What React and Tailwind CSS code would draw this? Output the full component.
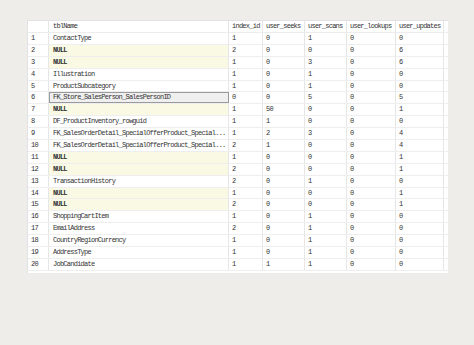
import React from "react";

const rows = [
  ["ContactType", 1, 0, 1, 0, 0],
  ["NULL", 2, 0, 0, 0, 6],
  ["NULL", 1, 0, 3, 0, 6],
  ["Illustration", 1, 0, 1, 0, 0],
  ["ProductSubcategory", 1, 0, 1, 0, 0],
  ["FK_Store_SalesPerson_SalesPersonID", 0, 0, 5, 0, 5],
  ["NULL", 1, 50, 0, 0, 1],
  ["DF_ProductInventory_rowguid", 1, 1, 0, 0, 0],
  ["FK_SalesOrderDetail_SpecialOfferProduct_Special...", 1, 2, 3, 0, 4],
  ["FK_SalesOrderDetail_SpecialOfferProduct_Special...", 2, 1, 0, 0, 4],
  ["NULL", 1, 0, 0, 0, 1],
  ["NULL", 2, 0, 0, 0, 1],
  ["TransactionHistory", 2, 0, 1, 0, 0],
  ["NULL", 1, 0, 0, 0, 1],
  ["NULL", 2, 0, 0, 0, 1],
  ["ShoppingCartItem", 1, 0, 1, 0, 0],
  ["EmailAddress", 2, 0, 1, 0, 0],
  ["CountryRegionCurrency", 1, 0, 1, 0, 0],
  ["AddressType", 1, 0, 1, 0, 0],
  ["JobCandidate", 1, 1, 1, 0, 0],
];

const numCols = [
  { w: "w-[34px]" },
  { w: "w-[42px]" },
  { w: "w-[42px]" },
  { w: "w-[49px]" },
  { w: "w-[48px]" },
];

export default function App() {
  return (
    <div
      className="w-[474px] h-[345px] bg-[#eeede9] pt-[20px] pl-[27px] text-[#333333]"
      style={{ fontFamily: '"Liberation Mono", "DejaVu Sans Mono", monospace' }}
    >
      <div className="w-[421px] h-[253px] bg-white border-t border-l border-[#e2e2e2] text-[7px] tracking-[-0.75px] leading-none">
        {/* header */}
        <div className="flex h-[12px] border-b border-[#ececec]">
          <div className="w-[21px] border-r border-[#e6e6e6]" />
          <div className="w-[180px] border-r border-[#e6e6e6] flex items-center pl-[4px]">tblName</div>
          <div className="w-[34px] border-r border-[#e6e6e6] flex items-center pl-[3px]">index_id</div>
          <div className="w-[42px] border-r border-[#e6e6e6] flex items-center pl-[3px]">user_seeks</div>
          <div className="w-[42px] border-r border-[#e6e6e6] flex items-center pl-[3px]">user_scans</div>
          <div className="w-[49px] border-r border-[#e6e6e6] flex items-center pl-[3px]">user_lookups</div>
          <div className="w-[48px] border-r border-[#e6e6e6] flex items-center pl-[3px]">user_updates</div>
        </div>
        {rows.map((r, i) => {
          const isNull = r[0] === "NULL";
          const selected = i === 5;
          return (
            <div key={i} className="flex h-[11.9px] border-b border-[#eeeeee]">
              <div className="w-[21px] border-r border-[#e6e6e6] flex items-center pl-[3px]">{i + 1}</div>
              <div
                className={
                  selected
                    ? "w-[180px] bg-[#efefef] border border-[#9a9a9a] flex items-center pl-[3px]"
                    : isNull
                    ? "w-[180px] bg-[#fafae4] border-r border-[#e6e6e6] flex items-center pl-[4px] font-bold"
                    : "w-[180px] border-r border-[#e6e6e6] flex items-center pl-[4px]"
                }
              >
                {r[0]}
              </div>
              {numCols.map((c, j) => (
                <div key={j} className={`${c.w} border-r border-[#e6e6e6] flex items-center pl-[3px]`}>
                  {r[j + 1]}
                </div>
              ))}
            </div>
          );
        })}
      </div>
    </div>
  );
}
